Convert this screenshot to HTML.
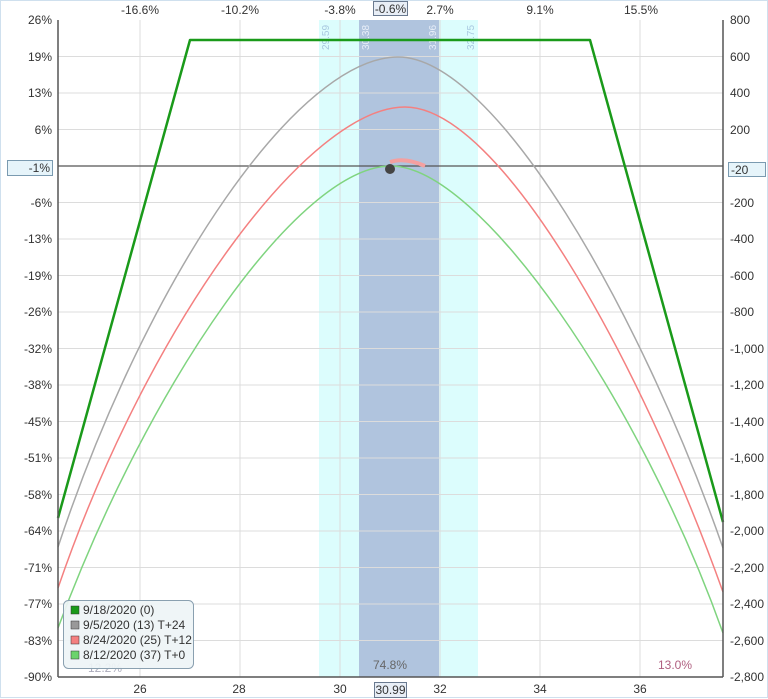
<!DOCTYPE html>
<html><head><meta charset="utf-8"><style>
html,body{margin:0;padding:0;background:#fff;}
svg{display:block;font-family:"Liberation Sans",Arial,sans-serif;}
</style></head><body>
<svg width="768" height="699" viewBox="0 0 768 699" xmlns="http://www.w3.org/2000/svg">
<rect x="0" y="0" width="768" height="699" fill="#fff"/>
<rect x="0.5" y="0.5" width="767" height="697" fill="none" stroke="#cfe0ee"/>
<rect x="319" y="20" width="159" height="657" fill="#dcfdfd"/>
<rect x="359" y="20" width="80" height="657" fill="#b0c4de"/>
<g stroke="#dcdcdc" stroke-width="1">
<line x1="58" y1="56.5" x2="723" y2="56.5"/><line x1="58" y1="93" x2="723" y2="93"/><line x1="58" y1="129.5" x2="723" y2="129.5"/>
<line x1="58" y1="202.5" x2="723" y2="202.5"/><line x1="58" y1="239" x2="723" y2="239"/><line x1="58" y1="275.5" x2="723" y2="275.5"/>
<line x1="58" y1="312" x2="723" y2="312"/><line x1="58" y1="348.5" x2="723" y2="348.5"/><line x1="58" y1="385" x2="723" y2="385"/>
<line x1="58" y1="421.5" x2="723" y2="421.5"/><line x1="58" y1="458" x2="723" y2="458"/><line x1="58" y1="494.5" x2="723" y2="494.5"/>
<line x1="58" y1="531" x2="723" y2="531"/><line x1="58" y1="567.5" x2="723" y2="567.5"/><line x1="58" y1="604" x2="723" y2="604"/>
<line x1="58" y1="640.5" x2="723" y2="640.5"/>
<line x1="140" y1="20" x2="140" y2="677"/><line x1="240" y1="20" x2="240" y2="677"/><line x1="340" y1="20" x2="340" y2="677"/>
<line x1="440" y1="20" x2="440" y2="677"/><line x1="540" y1="20" x2="540" y2="677"/><line x1="640" y1="20" x2="640" y2="677"/>
</g>
<g font-size="10" fill="#a8c8e0">
<text transform="translate(329,50) rotate(-90)">29.59</text>
<text transform="translate(369,50) rotate(-90)" fill="#e8eef8">30.38</text>
<text transform="translate(436,50) rotate(-90)" fill="#e8eef8">31.96</text>
<text transform="translate(474,50) rotate(-90)">32.75</text>
</g>
<line x1="58" y1="166" x2="723" y2="166" stroke="#555" stroke-width="1.3"/>
<path d="M58 628 C150 380 300 166 391 166 C480 166 640 400 723 633" fill="none" stroke="#7fd47f" stroke-width="1.5"/>
<path d="M58 588 C150 320 310 107 405 107 C500 107 640 360 723 592" fill="none" stroke="#f48080" stroke-width="1.5"/>
<path d="M58 547 C150 270 300 57 398 57 C495 57 640 310 723 548" fill="none" stroke="#a8a8a8" stroke-width="1.5"/>
<path d="M58 518 L190 40 L590 40 L723 522" fill="none" stroke="#1a9a1a" stroke-width="2.5" stroke-linejoin="round"/>
<path d="M390 162 Q405 157 425 166" fill="none" stroke="#f4a0a0" stroke-width="4"/>
<circle cx="390" cy="169" r="5" fill="#444"/>
<line x1="58" y1="20" x2="58" y2="677" stroke="#555" stroke-width="1.5"/>
<line x1="723" y1="20" x2="723" y2="677" stroke="#555" stroke-width="1.5"/>
<line x1="58" y1="677" x2="723" y2="677" stroke="#555" stroke-width="1.5"/>
<g font-size="12" fill="#333" text-anchor="end">
<text x="52" y="24">26%</text><text x="52" y="61">19%</text><text x="52" y="97">13%</text><text x="52" y="134">6%</text>
<text x="52" y="207">-6%</text><text x="52" y="243">-13%</text><text x="52" y="280">-19%</text><text x="52" y="316">-26%</text>
<text x="52" y="353">-32%</text><text x="52" y="389">-38%</text><text x="52" y="426">-45%</text><text x="52" y="462">-51%</text>
<text x="52" y="499">-58%</text><text x="52" y="535">-64%</text><text x="52" y="572">-71%</text><text x="52" y="608">-77%</text>
<text x="52" y="645">-83%</text><text x="52" y="681">-90%</text>
</g>
<rect x="7.5" y="160.5" width="45" height="15" fill="#e6f4fa" stroke="#7a9ab0"/>
<text x="50" y="172" font-size="12" fill="#333" text-anchor="end">-1%</text>
<g font-size="12" fill="#333">
<text x="730" y="24">800</text><text x="730" y="61">600</text><text x="730" y="97">400</text><text x="730" y="134">200</text>
<text x="730" y="207">-200</text><text x="730" y="243">-400</text><text x="730" y="280">-600</text><text x="730" y="316">-800</text>
<text x="730" y="353">-1,000</text><text x="730" y="389">-1,200</text><text x="730" y="426">-1,400</text><text x="730" y="462">-1,600</text>
<text x="730" y="499">-1,800</text><text x="730" y="535">-2,000</text><text x="730" y="572">-2,200</text><text x="730" y="608">-2,400</text>
<text x="730" y="645">-2,600</text><text x="730" y="681">-2,800</text>
</g>
<rect x="728.5" y="162.5" width="37" height="14" fill="#e6f4fa" stroke="#7a9ab0"/>
<text x="731" y="174" font-size="12" fill="#333">-20</text>
<g font-size="12" fill="#333" text-anchor="middle">
<text x="140" y="14">-16.6%</text><text x="240" y="14">-10.2%</text><text x="340" y="14">-3.8%</text>
<text x="440" y="14">2.7%</text><text x="540" y="14">9.1%</text><text x="641" y="14">15.5%</text>
</g>
<rect x="373.5" y="1.5" width="34" height="14" fill="#e8eef6" stroke="#6a7a90"/>
<text x="390.5" y="13" font-size="12" fill="#333" text-anchor="middle">-0.6%</text>
<g font-size="12" fill="#333" text-anchor="middle">
<text x="140" y="693">26</text><text x="239" y="693">28</text><text x="340" y="693">30</text>
<text x="440" y="693">32</text><text x="540" y="693">34</text><text x="640" y="693">36</text>
</g>
<rect x="374.5" y="682.5" width="32" height="15" fill="#e8eef6" stroke="#6a7a90"/>
<text x="390.5" y="694" font-size="12" fill="#333" text-anchor="middle">30.99</text>
<text x="390" y="669" font-size="12" fill="#666" text-anchor="middle">74.8%</text>
<text x="675" y="669" font-size="12" fill="#b06080" text-anchor="middle">13.0%</text>
<text x="105" y="672" font-size="12" fill="#aab" text-anchor="middle">12.2%</text>
<rect x="63.5" y="600.5" width="130" height="68" rx="5" fill="#eef4f6" fill-opacity="0.92" stroke="#8aa0b0"/>
<g font-size="12" fill="#333">
<rect x="71" y="606" width="8" height="8" fill="#1a9a1a" stroke="#333" stroke-width="0.5"/><text x="83" y="614">9/18/2020 (0)</text>
<rect x="71" y="621" width="8" height="8" fill="#999" stroke="#333" stroke-width="0.5"/><text x="83" y="629">9/5/2020 (13) T+24</text>
<rect x="71" y="636" width="8" height="8" fill="#f48080" stroke="#333" stroke-width="0.5"/><text x="83" y="644">8/24/2020 (25) T+12</text>
<rect x="71" y="651" width="8" height="8" fill="#6cd46c" stroke="#333" stroke-width="0.5"/><text x="83" y="659">8/12/2020 (37) T+0</text>
</g>
</svg>
</body></html>
